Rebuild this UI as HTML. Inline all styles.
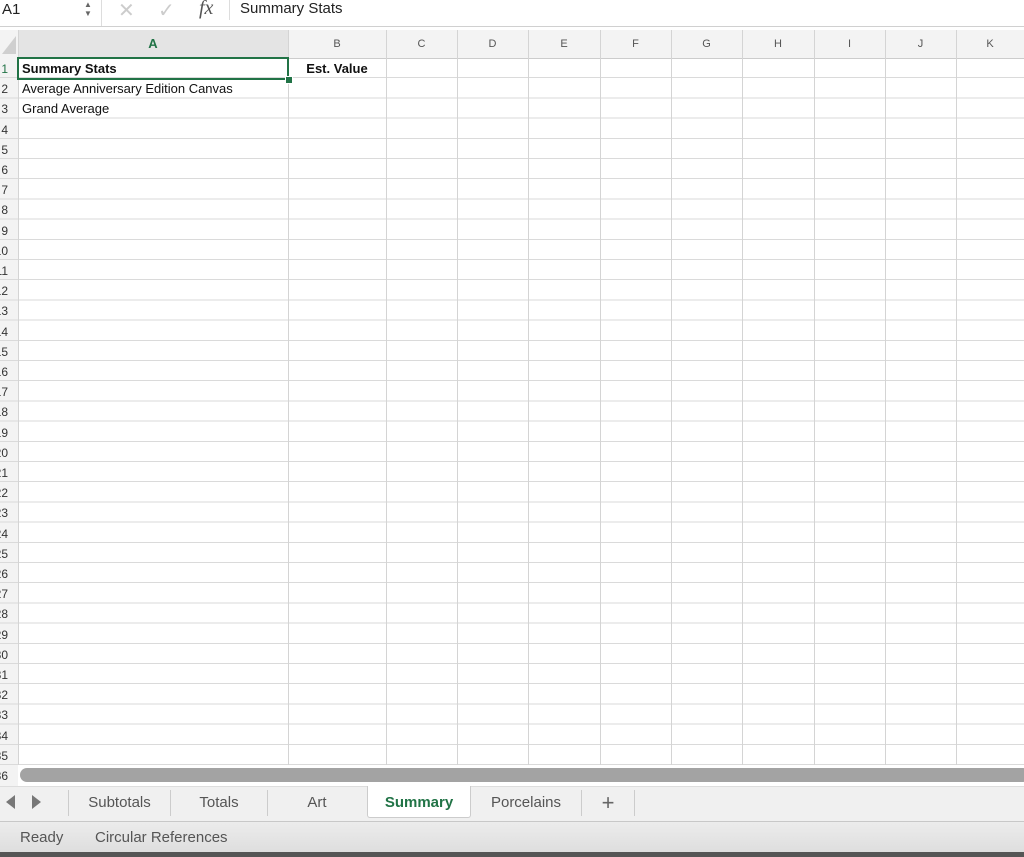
<!DOCTYPE html>
<html><head><meta charset="utf-8"><style>
body{margin:0;width:1024px;height:857px;overflow:hidden;position:relative;background:#fff;font-family:"Liberation Sans",sans-serif;}
.a{position:absolute;}
.grid{position:absolute;left:0;top:58px;width:1024px;height:708px;
background:repeating-linear-gradient(to bottom,transparent 0,transparent 19.2px,#dadada 19.2px,#dadada 20.2px);}
.v{position:absolute;top:30px;width:1px;height:756px;background:#d4d4d4;}
.rn{position:absolute;left:-16px;width:24px;text-align:right;font-size:12px;color:#333;line-height:20px;}
.ch{position:absolute;top:30px;height:28px;line-height:28px;text-align:center;font-size:11px;color:#555;}
.t{position:absolute;top:788px;height:30px;line-height:30px;font-size:15px;color:#555;text-align:center;}
.c{position:absolute;font-size:13px;line-height:18px;color:#111;}
</style></head><body>
<div class="a" style="left:0;top:0;width:1024px;height:26px;background:#fff;border-bottom:1px solid #d0d0d0"></div>
<div class="a" style="left:2px;top:0;font-size:15px;line-height:20px;color:#222">A1</div>
<div class="a" style="left:84px;top:0;font-size:8px;line-height:9px;color:#666">▲<br>▼</div>
<div class="a" style="left:101px;top:0;width:1px;height:26px;background:#ddd"></div>
<div class="a" style="left:118px;top:-2px;font-size:20px;color:#ccc">✕</div>
<div class="a" style="left:158px;top:-2px;font-size:20px;color:#ccc">✓</div>
<div class="a" style="left:199px;top:-3px;font-size:20px;font-style:italic;font-family:'Liberation Serif',serif;color:#555">fx</div>
<div class="a" style="left:229px;top:0;width:1px;height:20px;background:#ddd"></div>
<div class="a" style="left:240px;top:0;font-size:15px;line-height:18px;color:#222">Summary Stats</div>
<div class="a" style="left:0;top:30px;width:1024px;height:28px;background:#f3f3f3;border-bottom:1px solid #ccc"></div>
<div class="a" style="left:0;top:30px;width:18px;height:756px;background:#f3f3f3"></div>
<div class="a" style="left:18px;top:30px;width:270px;height:28px;background:#e4e4e4"></div>
<div class="a" style="left:2px;top:36px;width:0;height:0;border-left:14px solid transparent;border-bottom:18px solid #cfcfcf"></div>
<div class="grid"></div>
<div class="v" style="left:18px"></div><div class="v" style="left:288px"></div><div class="v" style="left:386px"></div><div class="v" style="left:457px"></div><div class="v" style="left:528px"></div><div class="v" style="left:600px"></div><div class="v" style="left:671px"></div><div class="v" style="left:742px"></div><div class="v" style="left:814px"></div><div class="v" style="left:885px"></div><div class="v" style="left:956px"></div>
<div class="ch" style="left:18px;width:270px;color:#217346;font-weight:bold;font-size:13px">A</div>
<div class="ch" style="left:288px;width:98px">B</div><div class="ch" style="left:386px;width:71px">C</div><div class="ch" style="left:457px;width:71px">D</div><div class="ch" style="left:528px;width:72px">E</div><div class="ch" style="left:600px;width:71px">F</div><div class="ch" style="left:671px;width:71px">G</div><div class="ch" style="left:742px;width:72px">H</div><div class="ch" style="left:814px;width:71px">I</div><div class="ch" style="left:885px;width:71px">J</div><div class="ch" style="left:956px;width:68px">K</div>
<div class="rn" style="top:59px;color:#217346">1</div><div class="rn" style="top:79px">2</div><div class="rn" style="top:99px">3</div><div class="rn" style="top:120px">4</div><div class="rn" style="top:140px">5</div><div class="rn" style="top:160px">6</div><div class="rn" style="top:180px">7</div><div class="rn" style="top:200px">8</div><div class="rn" style="top:221px">9</div><div class="rn" style="top:241px">10</div><div class="rn" style="top:261px">11</div><div class="rn" style="top:281px">12</div><div class="rn" style="top:301px">13</div><div class="rn" style="top:322px">14</div><div class="rn" style="top:342px">15</div><div class="rn" style="top:362px">16</div><div class="rn" style="top:382px">17</div><div class="rn" style="top:402px">18</div><div class="rn" style="top:423px">19</div><div class="rn" style="top:443px">20</div><div class="rn" style="top:463px">21</div><div class="rn" style="top:483px">22</div><div class="rn" style="top:503px">23</div><div class="rn" style="top:524px">24</div><div class="rn" style="top:544px">25</div><div class="rn" style="top:564px">26</div><div class="rn" style="top:584px">27</div><div class="rn" style="top:604px">28</div><div class="rn" style="top:625px">29</div><div class="rn" style="top:645px">30</div><div class="rn" style="top:665px">31</div><div class="rn" style="top:685px">32</div><div class="rn" style="top:705px">33</div><div class="rn" style="top:726px">34</div><div class="rn" style="top:746px">35</div><div class="rn" style="top:766px">36</div>
<div class="a" style="left:17px;top:57px;width:272px;height:23px;border:2px solid #217346;box-sizing:border-box"></div>
<div class="a" style="left:285px;top:76px;width:6px;height:6px;background:#217346;border:1px solid #fff"></div>
<div class="c" style="left:22px;top:60px;font-weight:bold">Summary Stats</div>
<div class="c" style="left:288px;top:60px;width:98px;text-align:center;font-weight:bold">Est. Value</div>
<div class="c" style="left:22px;top:80px">Average Anniversary Edition Canvas</div>
<div class="c" style="left:22px;top:100px">Grand Average</div>
<div class="a" style="left:18px;top:765px;width:1006px;height:21px;background:#fff"></div>
<div class="a" style="left:20px;top:768px;width:1010px;height:14px;border-radius:7px;background:#a3a3a3"></div>
<div class="a" style="left:0;top:786px;width:1024px;height:36px;background:#f0f0f0;border-top:1px solid #ddd;border-bottom:1px solid #c8c8c8;box-sizing:border-box"></div>
<div class="a" style="left:6px;top:795px;width:0;height:0;border-top:7px solid transparent;border-bottom:7px solid transparent;border-right:9px solid #777"></div>
<div class="a" style="left:32px;top:795px;width:0;height:0;border-top:7px solid transparent;border-bottom:7px solid transparent;border-left:9px solid #777"></div>
<div class="a" style="left:68px;top:790px;width:1px;height:26px;background:#ccc"></div>
<div class="t" style="left:69px;width:101px">Subtotals</div>
<div class="a" style="left:170px;top:790px;width:1px;height:26px;background:#ccc"></div>
<div class="t" style="left:171px;width:96px">Totals</div>
<div class="a" style="left:267px;top:790px;width:1px;height:26px;background:#ccc"></div>
<div class="t" style="left:268px;width:98px">Art</div>
<div class="a" style="left:367px;top:786px;width:102px;height:31px;background:#fff;border:1px solid #ccc;border-top:none;border-radius:0 0 3px 3px"></div>
<div class="t" style="left:367px;width:104px;color:#217346;font-weight:bold">Summary</div>
<div class="t" style="left:471px;width:110px">Porcelains</div>
<div class="a" style="left:581px;top:790px;width:1px;height:26px;background:#ccc"></div>
<div class="t" style="left:582px;width:52px;font-size:22px;color:#666">+</div>
<div class="a" style="left:634px;top:790px;width:1px;height:26px;background:#ccc"></div>
<div class="a" style="left:0;top:822px;width:1024px;height:30px;background:linear-gradient(#ececec,#dedede)"></div>
<div class="a" style="left:20px;top:828px;font-size:15px;line-height:20px;color:#555">Ready</div>
<div class="a" style="left:95px;top:828px;font-size:15px;line-height:20px;color:#555">Circular References</div>
<div class="a" style="left:0;top:852px;width:1024px;height:5px;background:#555"></div>
</body></html>
